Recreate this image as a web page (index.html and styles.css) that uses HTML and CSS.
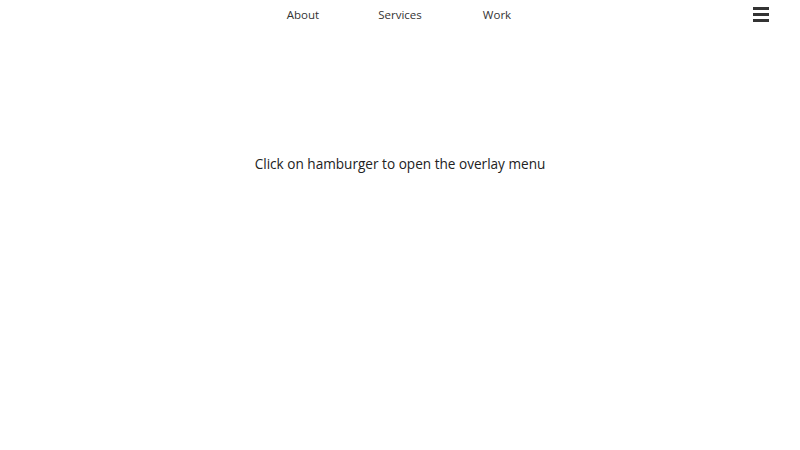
FILE: index.html
```html
<!DOCTYPE html>
<html lang="en">
<head>
<meta charset="utf-8">
<title>Overlay menu</title>
<link rel="stylesheet" href="styles.css">
</head>
<body>
<header class="header">
  <nav class="nav">
    <a class="nav-link" href="#">About</a>
    <a class="nav-link" href="#">Services</a>
    <a class="nav-link" href="#">Work</a>
  </nav>
  <button class="burger" aria-label="Open menu">
    <span class="bar"></span>
    <span class="bar"></span>
    <span class="bar"></span>
  </button>
</header>
<main class="main">
  <p class="hint">Click on hamburger to open the overlay menu</p>
</main>
</body>
</html>
```

FILE: styles.css
```css
* { box-sizing: border-box; }
html, body { margin: 0; padding: 0; background: #fff; }
body {
  font-family: "Open Sans", "DejaVu Sans", sans-serif;
  color: #333;
  width: 800px;
  height: 450px;
  overflow: hidden;
}
.header {
  position: relative;
  height: 28px;
  display: flex;
  justify-content: center;
  align-items: center;
}
.nav {
  display: flex;
  justify-content: center;
}
.nav-link {
  width: 97px;
  text-align: center;
  font-size: 11.5px;
  color: #333;
  text-decoration: none;
}
.burger {
  position: absolute;
  right: 31px;
  top: 7px;
  width: 16px;
  height: 15px;
  padding: 0;
  border: 0;
  background: none;
  display: flex;
  flex-direction: column;
  justify-content: space-between;
}
.bar {
  display: block;
  width: 16px;
  height: 3px;
  background: #333;
}
.main {
  padding-top: 125px;
  text-align: center;
}
.hint {
  margin: 0;
  font-size: 13.6px;
  line-height: 22px;
  color: #222;
}
```
